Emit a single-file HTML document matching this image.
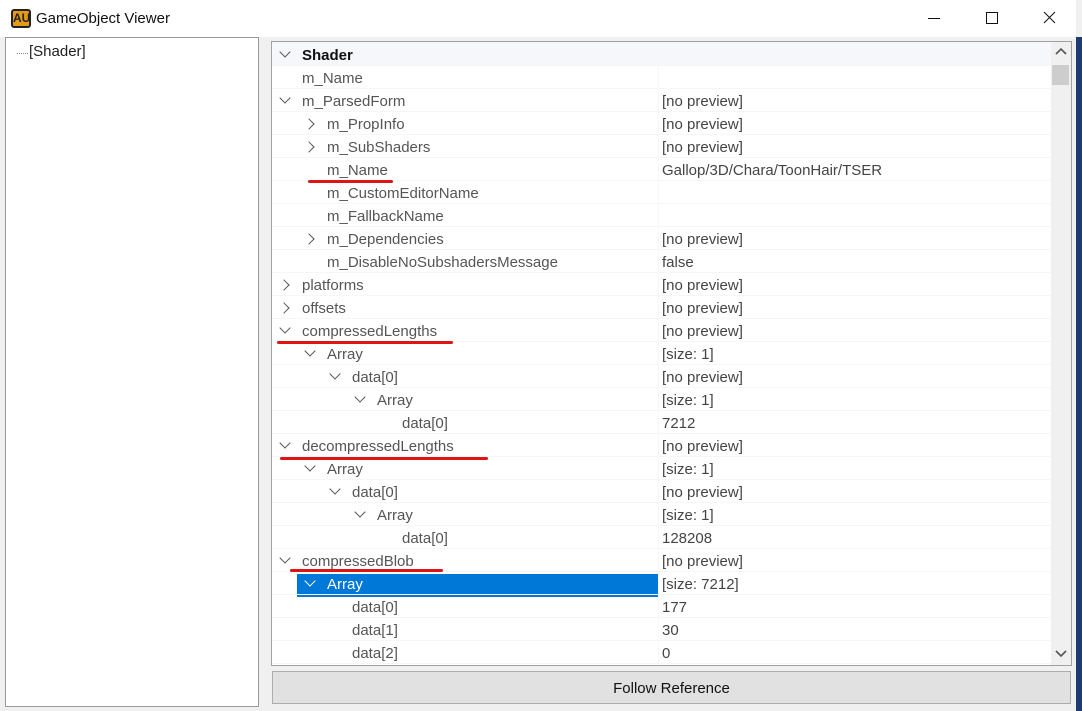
<!DOCTYPE html>
<html><head><meta charset="utf-8"><style>
*{margin:0;padding:0;box-sizing:border-box}
body{width:1082px;height:711px;background:#f0f0f0;font-family:"Liberation Sans",sans-serif;position:relative;overflow:hidden}
.title{position:absolute;left:0;top:0;width:1076px;height:37px;background:#fff}
.title span{position:absolute;left:36px;top:10px;font-size:15px;color:#111}
.logo{position:absolute;left:11px;top:9px;width:20px;height:19px;background:#e59a18;border:2px solid #222;border-radius:3px;font-size:12px;font-weight:bold;color:#222;line-height:15px;text-align:center}
.left{position:absolute;left:5px;top:37px;width:254px;height:670px;background:#fff;border:1px solid #9a9a9a}
.left span{position:absolute;left:23px;top:5px;font-size:15px;color:#222}
.left i{position:absolute;left:11px;top:15px;width:11px;border-top:1px dotted #888}
.tree{position:absolute;left:271px;top:41px;width:801px;height:625px;background:#fff;border:1px solid #a0a0a0;overflow:hidden}
.row{position:absolute;left:0;width:779px;height:23px;font-size:15px;color:#555;line-height:23px;border-bottom:1px solid #f6f6f6}
.row .k{position:absolute;top:1px}
.row .v{position:absolute;left:390px;top:1px;color:#444}
.row .c{position:absolute;top:7px;width:8px;height:8px;border-right:1.8px solid #555;border-bottom:1.8px solid #555}
.d{transform:rotate(45deg)}
.r{transform:rotate(-45deg)}
.sel{position:absolute;left:25px;top:532px;width:361px;height:23px;background:#0078d7}
.vline{position:absolute;left:386px;top:23px;width:1px;height:600px;background:#f7f7f7}
.sb{position:absolute;left:779px;top:0;width:20px;height:623px;background:#f0f0f0}
.thumb{position:absolute;left:780px;top:23px;width:17px;height:20px;background:#cdcdcd}
.btn{position:absolute;left:272px;top:671px;width:799px;height:33px;background:#e1e1e1;border:1px solid #adadad;text-align:center;line-height:33px;font-size:15px;color:#111}
.red{position:absolute;height:3px;background:#e01414;border-radius:2px}
</style></head><body>
<div class="title"><div class="logo">AU</div><span>GameObject Viewer</span>
<svg style="position:absolute;left:920px;top:8px" width="150" height="22"><line x1="8" y1="10.5" x2="20" y2="10.5" stroke="#111"/><rect x="66.5" y="4.5" width="11" height="11" fill="none" stroke="#111"/><path d="M124 4L135 15M135 4L124 15" stroke="#111"/></svg></div>
<div style="position:absolute;left:1076px;top:37px;width:6px;height:674px;background:#1d3d72"></div>
<div class="left"><i></i><span>[Shader]</span></div>
<div class="tree">
<div style="position:absolute;left:0;top:0;width:779px;height:24px;background:#f5f7fa"></div>
<div class="vline"></div>
<div class="sel"></div>
<div id="rows"></div>
<div class="sb"><svg style="position:absolute;left:4px;top:5px" width="12" height="10"><path d="M1 7L6 2L11 7" stroke="#555" stroke-width="1.6" fill="none"/></svg><svg style="position:absolute;left:4px;top:607px" width="12" height="10"><path d="M1 2L6 7L11 2" stroke="#555" stroke-width="1.6" fill="none"/></svg></div>
<div class="thumb"></div>
</div>
<div class="btn">Follow Reference</div>
<div class="red" style="left:308px;top:180px;width:85px"></div>
<div class="red" style="left:277px;top:341px;width:176px"></div>
<div class="red" style="left:280px;top:457px;width:208px"></div>
<div class="red" style="left:290px;top:569px;width:153px"></div>
<script>
var R=[["Shader",0,"d",""],["m_Name",0,"",""],["m_ParsedForm",0,"d","[no preview]"],["m_PropInfo",1,"r","[no preview]"],["m_SubShaders",1,"r","[no preview]"],["m_Name",1,"","Gallop/3D/Chara/ToonHair/TSER"],["m_CustomEditorName",1,"",""],["m_FallbackName",1,"",""],["m_Dependencies",1,"r","[no preview]"],["m_DisableNoSubshadersMessage",1,"","false"],["platforms",0,"r","[no preview]"],["offsets",0,"r","[no preview]"],["compressedLengths",0,"d","[no preview]"],["Array",1,"d","[size: 1]"],["data[0]",2,"d","[no preview]"],["Array",3,"d","[size: 1]"],["data[0]",4,"","7212"],["decompressedLengths",0,"d","[no preview]"],["Array",1,"d","[size: 1]"],["data[0]",2,"d","[no preview]"],["Array",3,"d","[size: 1]"],["data[0]",4,"","128208"],["compressedBlob",0,"d","[no preview]"],["Array",1,"d","[size: 7212]"],["data[0]",2,"","177"],["data[1]",2,"","30"],["data[2]",2,"","0"]];
var h="";R.forEach(function(r,i){var x=30+25*r[1];var sel=i==23;var col=sel?"#fff":(i==0?"#111":"#555");var cc=sel?"#fff":"#555";
h+='<div class="row" style="top:'+(1+23*i)+'px">';
if(r[2])h+='<div class="c '+r[2]+'" style="left:'+(x-21+(r[2]=="r"?-1:0))+'px;top:'+(r[2]=="d"?5:8)+'px;border-color:'+cc+'"></div>';
h+='<div class="k" style="left:'+x+'px;color:'+col+(i==0?';font-weight:bold':'')+'">'+r[0]+'</div><div class="v">'+r[3]+'</div></div>';});
document.getElementById("rows").innerHTML=h;
</script>
</body></html>
